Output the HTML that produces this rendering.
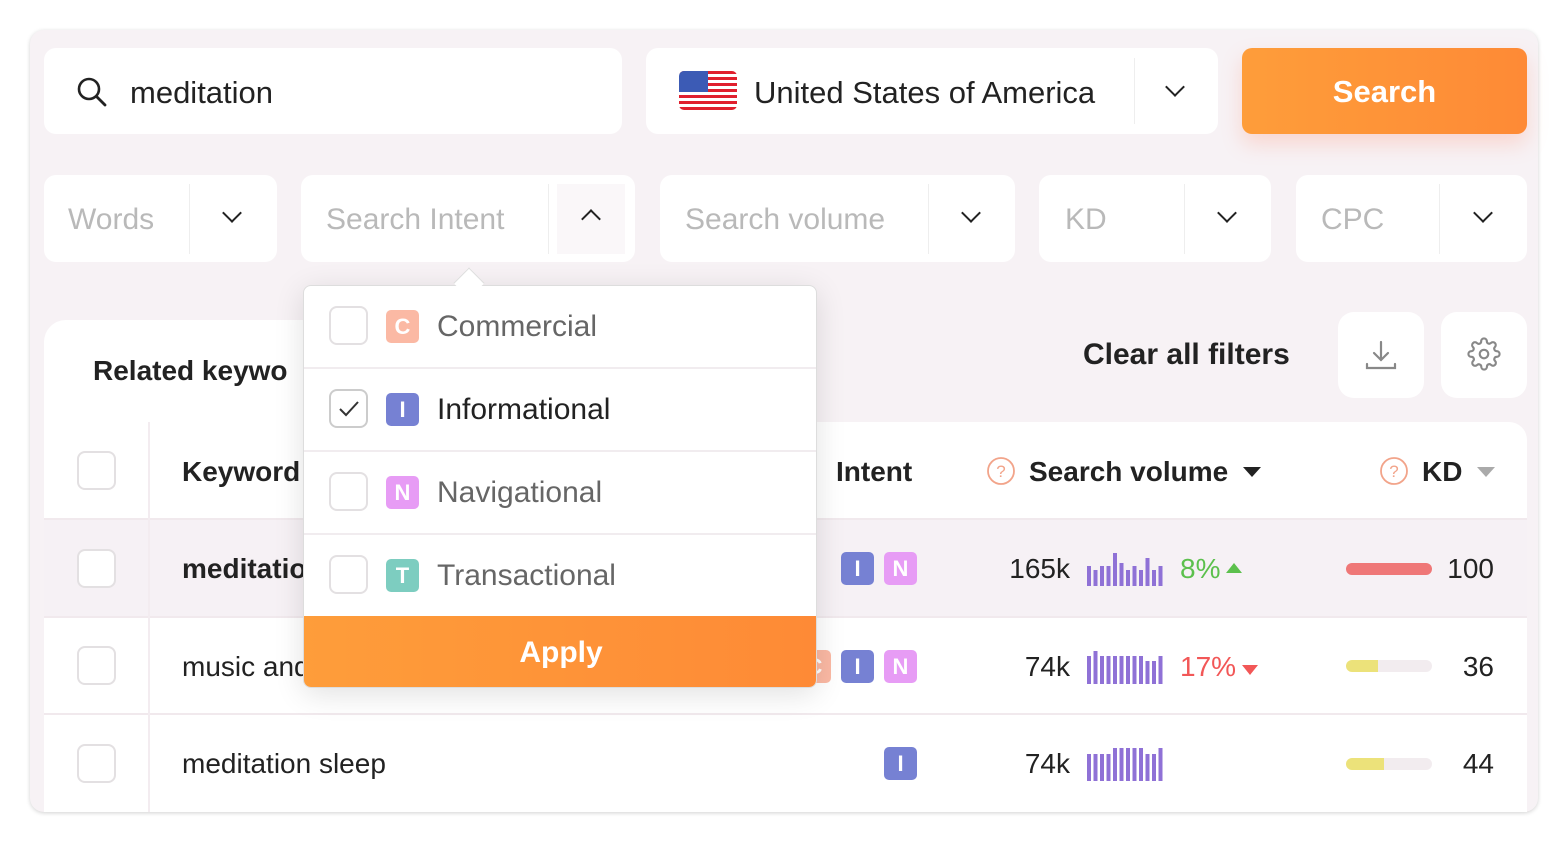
<!DOCTYPE html>
<html><head><meta charset="utf-8"><style>
*{box-sizing:border-box;margin:0;padding:0}
body{width:1568px;height:842px;background:#fff;font-family:"Liberation Sans",sans-serif;position:relative;overflow:hidden;color:#222}
.a{position:absolute}
.card{left:30px;top:30px;width:1508px;height:782px;background:#f7f2f5;border-radius:14px;box-shadow:0 1px 4px rgba(0,0,0,.18)}
.box{background:#fff;border-radius:12px}
.ph{color:#b9b9b9;font-size:30px}
.div{width:1px;background:#eee}
.chev{width:14px;height:14px;border-right:2.5px solid #222;border-bottom:2.5px solid #222;transform:rotate(45deg)}
.cb{width:39px;height:39px;border:2px solid #e3e0e2;border-radius:8px;background:#fff}
.bd{width:33px;height:33px;border-radius:5px;color:#fff;font-size:22px;font-weight:bold;text-align:center;line-height:33px}
.t28{font-size:28px}
.row{left:44px;width:1483px;border-top:2px solid #f1e9ed}
</style></head><body>
<div class="a card"></div>
<!-- search -->
<div class="a box" style="left:44px;top:48px;width:578px;height:86px"></div>
<svg class="a" style="left:76px;top:76px" width="32" height="32" viewBox="0 0 32 32"><circle cx="13" cy="13" r="10" fill="none" stroke="#222" stroke-width="2.6"/><path d="M20.5 20.5 L29 29" stroke="#222" stroke-width="2.8" stroke-linecap="round"/></svg>
<div class="a" style="left:130px;top:75px;font-size:31px">meditation</div>
<div class="a box" style="left:646px;top:48px;width:572px;height:86px"></div>
<svg class="a" style="left:679px;top:71px" width="58" height="39" viewBox="0 0 58 39"><defs><clipPath id="c"><rect width="58" height="39" rx="5"/></clipPath></defs><g clip-path="url(#c)"><rect width="58" height="39" fill="#fff"/><rect y="0" width="58" height="3" fill="#e0202e"/><rect y="6" width="58" height="3" fill="#e0202e"/><rect y="12" width="58" height="3" fill="#e0202e"/><rect y="18" width="58" height="3" fill="#e0202e"/><rect y="24" width="58" height="3" fill="#e0202e"/><rect y="30" width="58" height="3" fill="#e0202e"/><rect y="36" width="58" height="3" fill="#e0202e"/><rect width="29" height="21" fill="#3c5bb5"/></g></svg>
<div class="a" style="left:754px;top:75px;font-size:31px;color:#222">United States of America</div>
<div class="a div" style="left:1134px;top:58px;height:66px"></div>
<div class="a chev" style="left:1168px;top:80px"></div>
<div class="a" style="left:1242px;top:48px;width:285px;height:86px;border-radius:10px;background:linear-gradient(90deg,#fe9d3a,#fe8a36);box-shadow:0 10px 20px rgba(255,130,100,.25);color:#fff;font-size:31px;font-weight:bold;text-align:center;line-height:88px">Search</div>
<!-- filters -->
<div class="a box" style="left:44px;top:175px;width:233px;height:87px"></div>
<div class="a ph" style="left:68px;top:203px">Words</div>
<div class="a div" style="left:189px;top:184px;height:70px"></div>
<div class="a chev" style="left:225px;top:206px"></div>
<div class="a box" style="left:301px;top:175px;width:334px;height:87px"></div>
<div class="a ph" style="left:326px;top:203px">Search Intent</div>
<div class="a div" style="left:548px;top:184px;height:70px"></div>
<div class="a" style="left:557px;top:184px;width:68px;height:70px;background:#faf7f9"></div>
<div class="a chev" style="left:584px;top:212px;transform:rotate(-135deg)"></div>
<div class="a box" style="left:660px;top:175px;width:355px;height:87px"></div>
<div class="a ph" style="left:685px;top:203px">Search volume</div>
<div class="a div" style="left:928px;top:184px;height:70px"></div>
<div class="a chev" style="left:964px;top:206px"></div>
<div class="a box" style="left:1039px;top:175px;width:232px;height:87px"></div>
<div class="a ph" style="left:1065px;top:203px">KD</div>
<div class="a div" style="left:1184px;top:184px;height:70px"></div>
<div class="a chev" style="left:1220px;top:206px"></div>
<div class="a box" style="left:1296px;top:175px;width:231px;height:87px"></div>
<div class="a ph" style="left:1321px;top:203px">CPC</div>
<div class="a div" style="left:1439px;top:184px;height:70px"></div>
<div class="a chev" style="left:1476px;top:206px"></div>
<!-- related -->
<div class="a" style="left:44px;top:320px;width:600px;height:104px;background:#fff;border-radius:22px 0 0 0"></div>
<div class="a" style="left:93px;top:355px;font-size:28px;font-weight:bold">Related keywo</div>
<div class="a" style="left:1083px;top:338px;font-size:30px;font-weight:bold;color:#222">Clear all filters</div>
<div class="a box" style="left:1338px;top:312px;width:86px;height:86px;border-radius:16px"></div>
<svg class="a" style="left:1364px;top:338px" width="34" height="34" viewBox="0 0 34 34" fill="none" stroke="#888" stroke-width="2.2" stroke-linecap="round"><path d="M17 4V22M10 15L17 22L24 15M3 26V30H31V26"/></svg>
<div class="a box" style="left:1441px;top:312px;width:86px;height:86px;border-radius:16px"></div>
<svg class="a" style="left:1467px;top:337px" width="34" height="34" viewBox="0 0 24 24" fill="none" stroke="#888" stroke-width="1.5"><circle cx="12" cy="12" r="3"/><path d="M19.4 15a1.65 1.65 0 0 0 .33 1.82l.06.06a2 2 0 1 1-2.830 2.83l-.06-.06a1.65 1.65 0 0 0-1.82-.33 1.650 1.65 0 0 0-1 1.51V21a2 2 0 1 1-4 0v-.09A1.65 1.65 0 0 0 9 19.4a1.65 1.65 0 0 0-1.82.33l-.06.06a2 2 0 1 1-2.83-2.83l.06-.06A1.65 1.65 0 0 0 4.68 15a1.65 1.65 0 0 0-1.51-1H3a2 2 0 1 1 0-4h.09A1.65 1.65 0 0 0 4.6 9a1.65 1.65 0 0 0-.33-1.82l-.06-.06a2 2 0 1 1 2.83-2.83l.06.06A1.65 1.65 0 0 0 9 4.68a1.65 1.65 0 0 0 1-1.51V3a2 2 0 1 1 4 0v.09a1.65 1.65 0 0 0 1 1.51 1.65 1.65 0 0 0 1.82-.33l.06-.06a2 2 0 1 1 2.83 2.83l-.06.06A1.65 1.65 0 0 0 19.4 9a1.65 1.65 0 0 0 1.51 1H21a2 2 0 1 1 0 4h-.09a1.65 1.65 0 0 0-1.51 1z"/></svg>
<!-- table -->
<div class="a" style="left:44px;top:422px;width:1483px;height:390px;background:#fff;border-radius:0 18px 0 0"></div>
<div class="a row" style="top:518px;height:99px;background:#f6f1f5"></div>
<div class="a row" style="top:616px;height:0"></div>
<div class="a row" style="top:713px;height:0"></div>
<div class="a" style="left:148px;top:422px;width:2px;height:390px;background:#f3ecf0"></div>
<div class="a cb" style="left:77px;top:451px"></div>
<div class="a cb" style="left:77px;top:549px"></div>
<div class="a cb" style="left:77px;top:646px"></div>
<div class="a cb" style="left:77px;top:744px"></div>
<div class="a t28" style="left:182px;top:456px;font-weight:bold">Keyword</div>
<div class="a t28" style="left:836px;top:456px;font-weight:bold">Intent</div>
<svg class="a" style="left:986px;top:456px" width="30" height="30"><circle cx="15" cy="15" r="13" fill="none" stroke="#f2a48a" stroke-width="1.8"/><text x="15" y="21" text-anchor="middle" font-size="17" fill="#f2a48a" font-family="Liberation Sans">?</text></svg>
<div class="a t28" style="left:1029px;top:456px;font-weight:bold">Search volume</div>
<div class="a" style="left:1243px;top:467px;border:9px solid transparent;border-top:10px solid #222;border-bottom:0"></div>
<svg class="a" style="left:1379px;top:456px" width="30" height="30"><circle cx="15" cy="15" r="13" fill="none" stroke="#f2a48a" stroke-width="1.8"/><text x="15" y="21" text-anchor="middle" font-size="17" fill="#f2a48a" font-family="Liberation Sans">?</text></svg>
<div class="a t28" style="left:1422px;top:456px;font-weight:bold">KD</div>
<div class="a" style="left:1477px;top:467px;border:9px solid transparent;border-top:10px solid #aaa;border-bottom:0"></div>

<div class="a t28" style="left:182px;top:553px;font-weight:bold">meditatio</div>
<div class="a t28" style="left:182px;top:651px">music and</div>
<div class="a t28" style="left:182px;top:748px">meditation sleep</div>

<div class="a bd" style="left:841px;top:552px;background:#7681d3">I</div>
<div class="a bd" style="left:884px;top:552px;background:#e79cf5">N</div>
<div class="a bd" style="left:798px;top:650px;background:#fbb9a4">C</div>
<div class="a bd" style="left:841px;top:650px;background:#7681d3">I</div>
<div class="a bd" style="left:884px;top:650px;background:#e79cf5">N</div>
<div class="a bd" style="left:884px;top:747px;background:#7681d3">I</div>

<div class="a t28" style="left:960px;width:110px;text-align:right;top:553px">165k</div>
<div class="a t28" style="left:960px;width:110px;text-align:right;top:651px">74k</div>
<div class="a t28" style="left:960px;width:110px;text-align:right;top:748px">74k</div>
<svg class="a" style="left:1087px;top:550px" width="80" height="240" fill="#8f71d6">
<g transform="translate(0,36)"><rect x="0" y="-20" width="4" height="20"/><rect x="6.5" y="-16" width="4" height="16"/><rect x="13" y="-20" width="4" height="20"/><rect x="19.5" y="-20" width="4" height="20"/><rect x="26" y="-33" width="4" height="33"/><rect x="32.5" y="-23" width="4" height="23"/><rect x="39" y="-16" width="4" height="16"/><rect x="45.5" y="-20" width="4" height="20"/><rect x="52" y="-16" width="4" height="16"/><rect x="58.5" y="-28" width="4" height="28"/><rect x="65" y="-16" width="4" height="16"/><rect x="71.5" y="-20" width="4" height="20"/></g>
<g transform="translate(0,134)"><rect x="0" y="-28" width="4" height="28"/><rect x="6.5" y="-33" width="4" height="33"/><rect x="13" y="-28" width="4" height="28"/><rect x="19.5" y="-28" width="4" height="28"/><rect x="26" y="-28" width="4" height="28"/><rect x="32.5" y="-28" width="4" height="28"/><rect x="39" y="-28" width="4" height="28"/><rect x="45.5" y="-28" width="4" height="28"/><rect x="52" y="-28" width="4" height="28"/><rect x="58.5" y="-23" width="4" height="23"/><rect x="65" y="-23" width="4" height="23"/><rect x="71.5" y="-28" width="4" height="28"/></g>
<g transform="translate(0,231)"><rect x="0" y="-27" width="4" height="27"/><rect x="6.5" y="-27" width="4" height="27"/><rect x="13" y="-27" width="4" height="27"/><rect x="19.5" y="-27" width="4" height="27"/><rect x="26" y="-33" width="4" height="33"/><rect x="32.5" y="-33" width="4" height="33"/><rect x="39" y="-33" width="4" height="33"/><rect x="45.5" y="-33" width="4" height="33"/><rect x="52" y="-33" width="4" height="33"/><rect x="58.5" y="-27" width="4" height="27"/><rect x="65" y="-27" width="4" height="27"/><rect x="71.5" y="-33" width="4" height="33"/></g>
</svg>
<div class="a t28" style="left:1180px;top:553px;color:#5cc04d">8%</div>
<div class="a" style="left:1226px;top:563px;border:8px solid transparent;border-bottom:10px solid #5cc04d;border-top:0"></div>
<div class="a t28" style="left:1180px;top:651px;color:#f25757">17%</div>
<div class="a" style="left:1242px;top:665px;border:8px solid transparent;border-top:10px solid #f25757;border-bottom:0"></div>

<div class="a" style="left:1346px;top:563px;width:86px;height:12px;border-radius:6px;background:#ef7777"></div>
<div class="a" style="left:1346px;top:660px;width:86px;height:12px;border-radius:6px;background:linear-gradient(90deg,#ece27a 0 37%,#f2ecef 37%)"></div>
<div class="a" style="left:1346px;top:758px;width:86px;height:12px;border-radius:6px;background:linear-gradient(90deg,#ece27a 0 44%,#f2ecef 44%)"></div>
<div class="a t28" style="left:1400px;width:94px;text-align:right;top:553px">100</div>
<div class="a t28" style="left:1400px;width:94px;text-align:right;top:651px">36</div>
<div class="a t28" style="left:1400px;width:94px;text-align:right;top:748px">44</div>

<!-- dropdown -->
<div class="a" style="left:303px;top:285px;width:514px;height:403px;background:#fff;border:1px solid #ddd;border-radius:8px;box-shadow:0 6px 30px rgba(0,0,0,.12);overflow:hidden">
 <div class="a" style="left:0;top:81px;width:100%;height:2px;background:#f1ecef"></div>
 <div class="a" style="left:0;top:164px;width:100%;height:2px;background:#f1ecef"></div>
 <div class="a" style="left:0;top:247px;width:100%;height:2px;background:#f1ecef"></div>
 <div class="a" style="left:-1px;top:330px;width:516px;height:73px;background:linear-gradient(90deg,#fe9d3a,#fe8a36);color:#fff;font-size:30px;font-weight:bold;text-align:center;line-height:73px">Apply</div>
</div>
<div class="a" style="left:458px;top:272px;width:22px;height:22px;background:#fff;border-left:1px solid #ddd;border-top:1px solid #ddd;transform:rotate(45deg)"></div>
<div class="a cb" style="left:329px;top:306px"></div>
<div class="a bd" style="left:386px;top:310px;background:#fbb9a4">C</div>
<div class="a" style="left:437px;top:310px;font-size:30px;color:#666">Commercial</div>
<div class="a cb" style="left:329px;top:389px;border-color:#ccc"></div>
<svg class="a" style="left:335px;top:395px" width="28" height="28"><path d="M5 14L11 20L23 7" fill="none" stroke="#333" stroke-width="2"/></svg>
<div class="a bd" style="left:386px;top:393px;background:#7681d3">I</div>
<div class="a" style="left:437px;top:393px;font-size:30px;color:#222">Informational</div>
<div class="a cb" style="left:329px;top:472px"></div>
<div class="a bd" style="left:386px;top:476px;background:#e79cf5">N</div>
<div class="a" style="left:437px;top:476px;font-size:30px;color:#666">Navigational</div>
<div class="a cb" style="left:329px;top:555px"></div>
<div class="a bd" style="left:386px;top:559px;background:#7dcdc0">T</div>
<div class="a" style="left:437px;top:559px;font-size:30px;color:#666">Transactional</div>
</body></html>
